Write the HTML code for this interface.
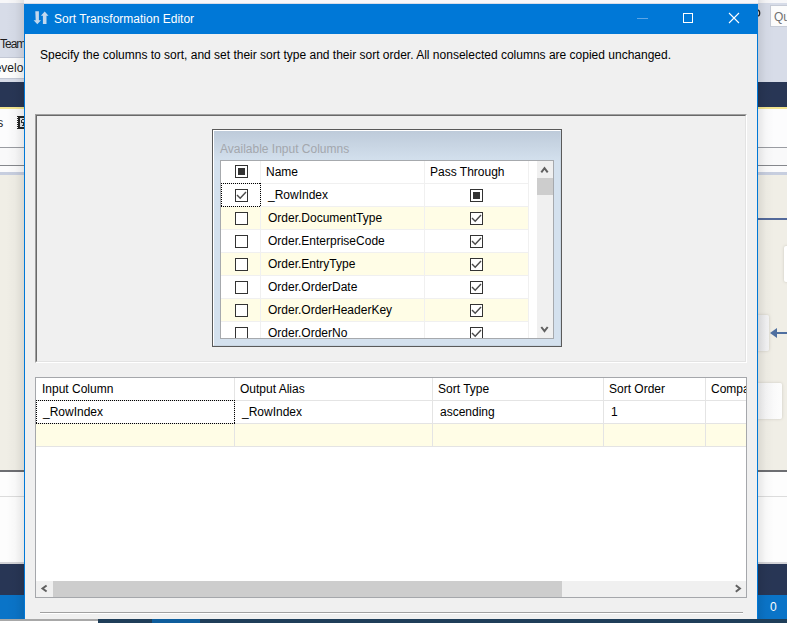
<!DOCTYPE html>
<html><head><meta charset="utf-8">
<style>
*{margin:0;padding:0;box-sizing:border-box}
html,body{width:787px;height:623px;overflow:hidden;background:#fff;position:relative;font-family:"Liberation Sans",sans-serif;font-size:12px;color:#000}
.a{position:absolute}
.t{position:absolute;white-space:nowrap;line-height:14px;font-size:12px}
</style></head><body>
<!-- ============ background app ============ -->
<div class="a" style="left:0;top:0;width:787px;height:3px;background:#f7f7f9"></div>
<div class="a" style="left:0;top:3px;width:787px;height:79px;background:#d7dce8"></div>
<div class="a" style="left:0;top:57px;width:24px;height:22px;background:#fdfdfd;border-top:1px solid #c3c8d5;border-bottom:1px solid #c3c8d5"></div>
<div class="t" style="left:0px;top:37px;color:#1e1e1e;letter-spacing:-1px">Team</div>
<div class="t" style="left:-14px;top:61px;color:#1e1e1e">Develo</div>
<svg class="a" style="left:755px;top:8px" width="8" height="10"><path d="M2 1.8Q4.7 1.8 4.7 5Q4.7 8.2 2 8.2" fill="none" stroke="#222" stroke-width="1.3"/></svg>
<div class="a" style="left:770px;top:5px;width:20px;height:22px;background:#fcfcfc;border:1px solid #c6cbd6"></div>
<div class="t" style="left:774px;top:10px;color:#717171">Qu</div>
<div class="a" style="left:0;top:82px;width:787px;height:25px;background:#283655"></div>
<div class="a" style="left:0;top:107px;width:787px;height:2px;background:#f3e590"></div>
<div class="a" style="left:0;top:109px;width:787px;height:38px;background:#fcfcfd"></div>
<div class="a" style="left:0;top:147px;width:787px;height:1px;background:#9a9ca2"></div>
<div class="a" style="left:0;top:148px;width:787px;height:17px;background:#f9f9fa"></div>
<div class="a" style="left:0;top:165px;width:787px;height:1px;background:#85878c"></div>
<div class="a" style="left:0;top:166px;width:787px;height:6px;background:#fbfbfc"></div>
<div class="a" style="left:0;top:172px;width:787px;height:3px;background:#c7cedf"></div>
<div class="a" style="left:0;top:175px;width:787px;height:295px;background:#f0eee6"></div>
<div class="a" style="left:0;top:470px;width:787px;height:2px;background:#6d6e72"></div>
<div class="a" style="left:0;top:472px;width:787px;height:91px;background:#fdfdfd"></div>
<div class="a" style="left:0;top:496px;width:787px;height:1px;background:#dcdcdc"></div>
<div class="a" style="left:0;top:562px;width:787px;height:2px;background:#d4d4d8"></div>
<div class="a" style="left:0;top:564px;width:787px;height:31px;background:#283655"></div>
<div class="a" style="left:0;top:595px;width:787px;height:24px;background:#0a74c8"></div>
<div class="t" style="left:770px;top:600px;color:#fff">0</div>
<div class="a" style="left:0;top:619px;width:787px;height:4px;background:#1f3e59"></div>
<div class="a" style="left:0;top:619px;width:98px;height:2px;background:#a8a8a8"></div>
<div class="a" style="left:0;top:621px;width:98px;height:2px;background:#fff"></div>
<div class="a" style="left:152px;top:619px;width:48px;height:4px;background:#0e5d9c"></div>

<!-- right side designer items -->
<div class="a" style="left:757px;top:218px;width:30px;height:2px;background:#53699a"></div>
<div class="a" style="left:784px;top:246px;width:10px;height:36px;background:#fff;border-radius:2px;box-shadow:0 0 3px #c8c6bd"></div>
<div class="a" style="left:750px;top:315px;width:19px;height:36px;background:linear-gradient(90deg,#e4e4e6,#f4f4f5);border-radius:2px;box-shadow:0 0 3px #c8c6bd"></div>
<div class="a" style="left:772px;top:332px;width:15px;height:2px;background:#4f6fa0"></div>
<div class="a" style="left:770px;top:328px;width:0;height:0;border-top:5px solid transparent;border-bottom:5px solid transparent;border-right:7px solid #4f6fa0"></div>
<div class="a" style="left:750px;top:383px;width:32px;height:36px;background:linear-gradient(90deg,#f0f0f1,#fdfdfd);border-radius:2px;box-shadow:0 0 3px #c8c6bd"></div>

<!-- left toolbar icon -->
<div class="t" style="left:-6px;top:116px;color:#1e1e1e">ts</div>
<svg class="a" style="left:17px;top:116px" width="7" height="13" shape-rendering="crispEdges"><rect x="0" y="0" width="7" height="13" fill="#262626"/><rect x="0" y="1" width="1" height="1" fill="#fff"/><rect x="0" y="3" width="1" height="1" fill="#fff"/><rect x="0" y="5" width="1" height="1" fill="#fff"/><rect x="0" y="7" width="1" height="1" fill="#fff"/><rect x="0" y="9" width="1" height="1" fill="#fff"/><rect x="0" y="11" width="1" height="1" fill="#fff"/><rect x="3" y="2" width="4" height="9" fill="#e8e8e8"/><path d="M4.5 3.5h2M4.5 3.5v3h2v3h-2" stroke="#333" fill="none" stroke-width="1"/></svg>

<!-- ============ dialog ============ -->
<div class="a" style="left:6px;top:0px;width:18px;height:619px;background:linear-gradient(90deg,rgba(0,0,0,0),rgba(0,0,0,0.02) 50%,rgba(0,0,0,0.09))"></div>
<div class="a" style="left:758px;top:0px;width:16px;height:619px;background:linear-gradient(270deg,rgba(0,0,0,0),rgba(0,0,0,0.02) 50%,rgba(0,0,0,0.09))"></div>
<div class="a" style="left:24px;top:4px;width:734px;height:615px;background:#0078d7"></div>
<div class="a" style="left:25px;top:34px;width:732px;height:585px;background:#f0f0f0"></div>

<!-- title -->
<svg class="a" style="left:28px;top:6px" width="30" height="26" viewBox="0 0 30 26">
  <path d="M7.3 5.2h3.6v9h2.1l-3.7 4-3.7-4h2.1z" fill="#c2d8ee"/>
  <path d="M16.7 5.6l3.8 4.2h-2v8.2h-3.6v-8.2h-2z" fill="#c2d8ee"/>
</svg>
<div class="t" style="left:54px;top:12px;color:#fff">Sort Transformation Editor</div>
<div class="a" style="left:637px;top:18px;width:11px;height:1px;background:#5ea6e6"></div>
<div class="a" style="left:683px;top:13px;width:10px;height:10px;border:1px solid #fff"></div>
<svg class="a" style="left:728px;top:12px" width="12" height="12" viewBox="0 0 12 12"><path d="M1 1L11 11M11 1L1 11" stroke="#fff" stroke-width="1.1"/></svg>

<div class="t" style="left:40px;top:48px">Specify the columns to sort, and set their sort type and their sort order. All nonselected columns are copied unchanged.</div>

<!-- sunken panel -->
<div class="a" style="left:35px;top:114px;width:712px;height:249px;border-top:1px solid #a0a0a0;border-left:1px solid #a0a0a0;border-right:1px solid #fff;border-bottom:1px solid #fff"></div>
<div class="a" style="left:36px;top:115px;width:710px;height:247px;border-top:1px solid #696969;border-left:1px solid #696969;border-right:1px solid #e3e3e3;border-bottom:1px solid #e3e3e3"></div>

<!-- available input columns -->
<div class="a" style="left:212px;top:129px;width:350px;height:218px;border:1px solid #5a5a5a;background:linear-gradient(180deg,#bdcad9 0px,#d4e1ee 32px,#d4e1ee 100%)"></div>
<div class="a" style="left:213px;top:130px;width:348px;height:216px;border:1px solid #fff;border-right-color:#c9d6e3;border-bottom-color:#c9d6e3"></div>
<div class="t" style="left:220px;top:142px;color:#a3a7ad">Available Input Columns</div>
<div class="a" style="left:220px;top:160px;width:334px;height:179px;border:1px solid #a6a9ad;background:#fff;overflow:hidden" id="lst">
<div class="a" style="left:0px;top:46px;width:307px;height:22px;background:#fffde6"></div>
<div class="a" style="left:0px;top:92px;width:307px;height:22px;background:#fffde6"></div>
<div class="a" style="left:0px;top:138px;width:307px;height:22px;background:#fffde6"></div>
<div class="a" style="left:0px;top:22px;width:307px;height:1px;background:#f0f0f0"></div>
<div class="a" style="left:0px;top:45px;width:307px;height:1px;background:#f0f0f0"></div>
<div class="a" style="left:0px;top:68px;width:307px;height:1px;background:#f0f0f0"></div>
<div class="a" style="left:0px;top:91px;width:307px;height:1px;background:#f0f0f0"></div>
<div class="a" style="left:0px;top:114px;width:307px;height:1px;background:#f0f0f0"></div>
<div class="a" style="left:0px;top:137px;width:307px;height:1px;background:#f0f0f0"></div>
<div class="a" style="left:0px;top:160px;width:307px;height:1px;background:#f0f0f0"></div>
<div class="a" style="left:39px;top:0px;width:1px;height:177px;background:#f0f0f0"></div>
<div class="a" style="left:203px;top:0px;width:1px;height:177px;background:#f0f0f0"></div>
<div class="a" style="left:307px;top:0px;width:1px;height:177px;background:#f0f0f0"></div>
<div class="t" style="left:45px;top:4px">Name</div>
<div class="t" style="left:209px;top:4px">Pass Through</div>
<div class="a" style="left:14px;top:4px;width:13px;height:13px;border:1px solid #333;background:#fff"></div><div class="a" style="left:17px;top:7px;width:7px;height:7px;background:#333"></div>
<div class="a" style="left:14px;top:28px;width:13px;height:13px;border:1px solid #333;background:#fff"></div><svg class="a" style="left:14px;top:28px" width="13" height="13" viewBox="0 0 13 13"><path d="M2 6L5.2 9.3L11 3" fill="none" stroke="#4a4a4a" stroke-width="1.4"/></svg>
<div class="a" style="left:249px;top:28px;width:13px;height:13px;border:1px solid #333;background:#fff"></div><div class="a" style="left:252px;top:31px;width:7px;height:7px;background:#333"></div>
<div class="t" style="left:47px;top:27px">_RowIndex</div>
<div class="a" style="left:14px;top:51px;width:13px;height:13px;border:1px solid #333;background:#fff"></div>
<div class="a" style="left:249px;top:51px;width:13px;height:13px;border:1px solid #333;background:#fff"></div><svg class="a" style="left:249px;top:51px" width="13" height="13" viewBox="0 0 13 13"><path d="M2 6L5.2 9.3L11 3" fill="none" stroke="#4a4a4a" stroke-width="1.4"/></svg>
<div class="t" style="left:47px;top:50px">Order.DocumentType</div>
<div class="a" style="left:14px;top:74px;width:13px;height:13px;border:1px solid #333;background:#fff"></div>
<div class="a" style="left:249px;top:74px;width:13px;height:13px;border:1px solid #333;background:#fff"></div><svg class="a" style="left:249px;top:74px" width="13" height="13" viewBox="0 0 13 13"><path d="M2 6L5.2 9.3L11 3" fill="none" stroke="#4a4a4a" stroke-width="1.4"/></svg>
<div class="t" style="left:47px;top:73px">Order.EnterpriseCode</div>
<div class="a" style="left:14px;top:97px;width:13px;height:13px;border:1px solid #333;background:#fff"></div>
<div class="a" style="left:249px;top:97px;width:13px;height:13px;border:1px solid #333;background:#fff"></div><svg class="a" style="left:249px;top:97px" width="13" height="13" viewBox="0 0 13 13"><path d="M2 6L5.2 9.3L11 3" fill="none" stroke="#4a4a4a" stroke-width="1.4"/></svg>
<div class="t" style="left:47px;top:96px">Order.EntryType</div>
<div class="a" style="left:14px;top:120px;width:13px;height:13px;border:1px solid #333;background:#fff"></div>
<div class="a" style="left:249px;top:120px;width:13px;height:13px;border:1px solid #333;background:#fff"></div><svg class="a" style="left:249px;top:120px" width="13" height="13" viewBox="0 0 13 13"><path d="M2 6L5.2 9.3L11 3" fill="none" stroke="#4a4a4a" stroke-width="1.4"/></svg>
<div class="t" style="left:47px;top:119px">Order.OrderDate</div>
<div class="a" style="left:14px;top:143px;width:13px;height:13px;border:1px solid #333;background:#fff"></div>
<div class="a" style="left:249px;top:143px;width:13px;height:13px;border:1px solid #333;background:#fff"></div><svg class="a" style="left:249px;top:143px" width="13" height="13" viewBox="0 0 13 13"><path d="M2 6L5.2 9.3L11 3" fill="none" stroke="#4a4a4a" stroke-width="1.4"/></svg>
<div class="t" style="left:47px;top:142px">Order.OrderHeaderKey</div>
<div class="a" style="left:14px;top:166px;width:13px;height:13px;border:1px solid #333;background:#fff"></div>
<div class="a" style="left:249px;top:166px;width:13px;height:13px;border:1px solid #333;background:#fff"></div><svg class="a" style="left:249px;top:166px" width="13" height="13" viewBox="0 0 13 13"><path d="M2 6L5.2 9.3L11 3" fill="none" stroke="#4a4a4a" stroke-width="1.4"/></svg>
<div class="t" style="left:47px;top:165px">Order.OrderNo</div>
<div class="a" style="left:0px;top:22px;width:40px;height:1px;background:repeating-linear-gradient(90deg,#000 0 1px,transparent 1px 2px)"></div><div class="a" style="left:0px;top:45px;width:40px;height:1px;background:repeating-linear-gradient(90deg,#000 0 1px,transparent 1px 2px)"></div><div class="a" style="left:0px;top:22px;width:1px;height:24px;background:repeating-linear-gradient(180deg,#000 0 1px,transparent 1px 2px)"></div><div class="a" style="left:39px;top:22px;width:1px;height:24px;background:repeating-linear-gradient(180deg,#000 0 1px,transparent 1px 2px)"></div>
<div class="a" style="left:316px;top:0px;width:16px;height:177px;background:#f0f0f0"></div>
<div class="a" style="left:316px;top:17px;width:16px;height:17px;background:#cdcdcd"></div>
<svg class="a" style="left:316px;top:0px" width="16" height="17"><path d="M4.3 11.3L7.5 7.2L10.7 11.3" fill="none" stroke="#606060" stroke-width="2"/></svg>
<svg class="a" style="left:316px;top:160px" width="16" height="17"><path d="M4.3 6L7.5 10.1L10.7 6" fill="none" stroke="#606060" stroke-width="2"/></svg>
</div>

<!-- grid -->
<div class="a" style="left:35px;top:377px;width:712px;height:221px;border:1px solid #a5a7ab;background:#fff;overflow:hidden" id="grd">
<div class="a" style="left:0px;top:46px;width:710px;height:22px;background:#fffde6"></div>
<div class="a" style="left:0px;top:22px;width:710px;height:1px;background:#e4e4e4"></div>
<div class="a" style="left:0px;top:45px;width:710px;height:1px;background:#e4e4e4"></div>
<div class="a" style="left:0px;top:68px;width:710px;height:1px;background:#e4e4e4"></div>
<div class="a" style="left:198px;top:0px;width:1px;height:69px;background:#e4e4e4"></div>
<div class="a" style="left:396px;top:0px;width:1px;height:69px;background:#e4e4e4"></div>
<div class="a" style="left:567px;top:0px;width:1px;height:69px;background:#e4e4e4"></div>
<div class="a" style="left:669px;top:0px;width:1px;height:69px;background:#e4e4e4"></div>
<div class="t" style="left:6px;top:4px">Input Column</div>
<div class="t" style="left:204px;top:4px">Output Alias</div>
<div class="t" style="left:402px;top:4px">Sort Type</div>
<div class="t" style="left:573px;top:4px">Sort Order</div>
<div class="t" style="left:675px;top:4px">Comparison Flags</div>
<div class="t" style="left:7px;top:27px">_RowIndex</div>
<div class="t" style="left:206px;top:27px">_RowIndex</div>
<div class="t" style="left:404px;top:27px">ascending</div>
<div class="t" style="left:575px;top:27px">1</div>
<div class="a" style="left:0px;top:22px;width:199px;height:1px;background:repeating-linear-gradient(90deg,#000 0 1px,transparent 1px 2px)"></div><div class="a" style="left:0px;top:45px;width:199px;height:1px;background:repeating-linear-gradient(90deg,#000 0 1px,transparent 1px 2px)"></div><div class="a" style="left:0px;top:22px;width:1px;height:24px;background:repeating-linear-gradient(180deg,#000 0 1px,transparent 1px 2px)"></div><div class="a" style="left:198px;top:22px;width:1px;height:24px;background:repeating-linear-gradient(180deg,#000 0 1px,transparent 1px 2px)"></div>
<div class="a" style="left:0px;top:203px;width:710px;height:16px;background:#f0f0f0"></div>
<div class="a" style="left:17px;top:203px;width:509px;height:16px;background:#cdcdcd"></div>
<svg class="a" style="left:0px;top:203px" width="17" height="16"><path d="M10.6 4.5L6.5 7.5L10.6 10.5" fill="none" stroke="#606060" stroke-width="2"/></svg>
<svg class="a" style="left:693px;top:203px" width="17" height="16"><path d="M6.8 4.3L10.9 7.5L6.8 10.7" fill="none" stroke="#606060" stroke-width="2"/></svg>
</div>

<!-- bottom separator -->
<div class="a" style="left:40px;top:612px;width:703px;height:1px;background:#a0a0a0"></div>
<div class="a" style="left:40px;top:613px;width:703px;height:1px;background:#fff"></div>
</body></html>
